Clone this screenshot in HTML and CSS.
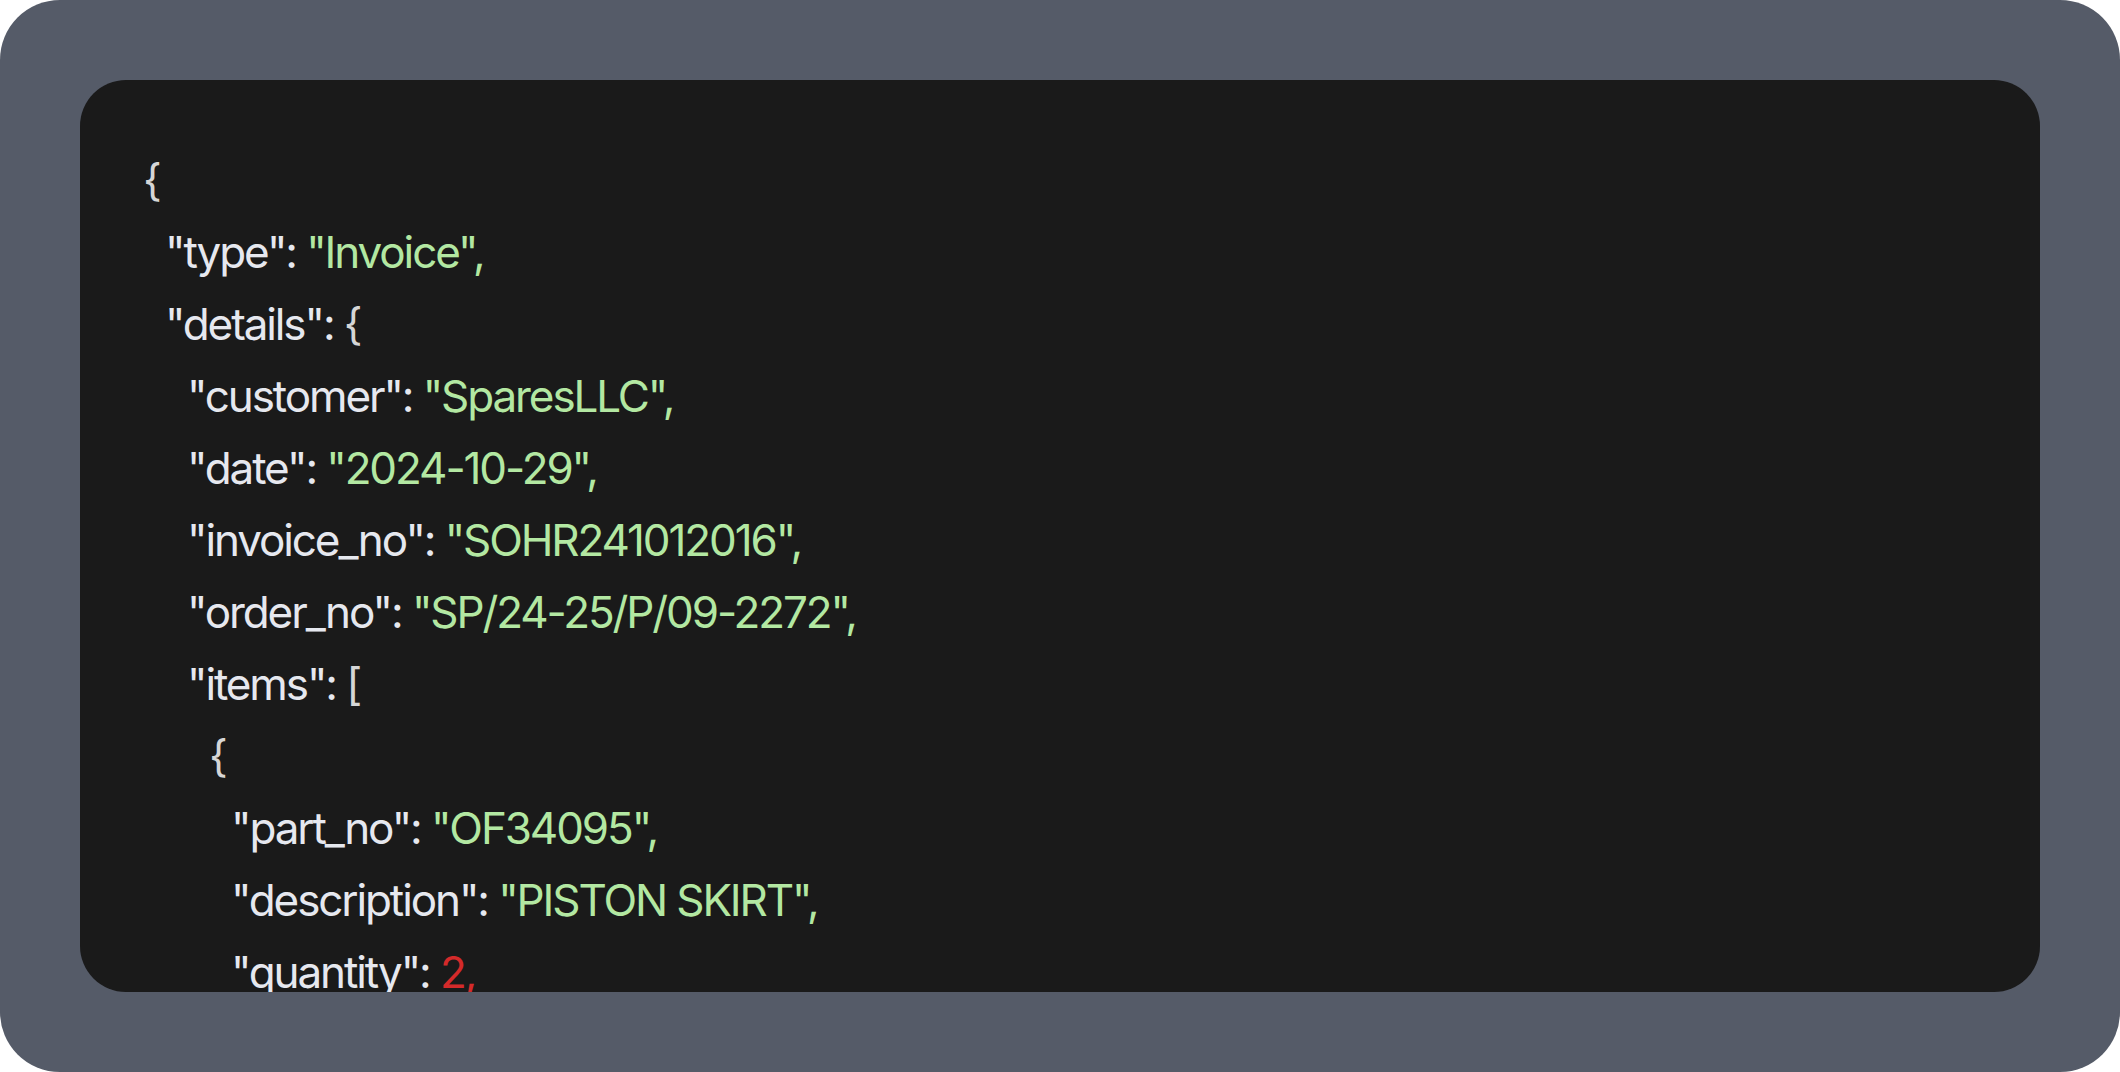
FILE: index.html
```html
<!DOCTYPE html>
<html lang="en">
<head>
<meta charset="utf-8">
<title>Invoice JSON</title>
<link rel="stylesheet" href="styles.css">
</head>
<body>
<div class="frame">
  <div class="panel">
    <div class="code">
      <div class="line l0"><span class="p">{</span></div>
      <div class="line l1"><span class="k">"type"</span><span class="c">: </span><span class="s">"Invoice",</span></div>
      <div class="line l1"><span class="k">"details"</span><span class="c">: </span><span class="p">{</span></div>
      <div class="line l2"><span class="k">"customer"</span><span class="c">: </span><span class="s">"SparesLLC",</span></div>
      <div class="line l2"><span class="k">"date"</span><span class="c">: </span><span class="s">"2024-10-29",</span></div>
      <div class="line l2"><span class="k">"invoice_no"</span><span class="c">: </span><span class="s">"SOHR241012016",</span></div>
      <div class="line l2"><span class="k">"order_no"</span><span class="c">: </span><span class="s">"SP/24-25/P/09-2272",</span></div>
      <div class="line l2"><span class="k">"items"</span><span class="c">: </span><span class="p">[</span></div>
      <div class="line l3"><span class="p">{</span></div>
      <div class="line l4"><span class="k">"part_no"</span><span class="c">: </span><span class="s">"OF34095",</span></div>
      <div class="line l4"><span class="k">"description"</span><span class="c">: </span><span class="s">"PISTON SKIRT",</span></div>
      <div class="line l4"><span class="k">"quantity"</span><span class="c">: </span><span class="n">2,</span></div>
      <div class="line l4"><span class="k">"unit_price"</span><span class="c">: </span><span class="n">1250,</span></div>
    </div>
  </div>
</div>
</body>
</html>
```

FILE: styles.css
```css
* { box-sizing: border-box; }
html, body {
  margin: 0;
  padding: 0;
  background: #ffffff;
}
body {
  width: 2120px;
  height: 1072px;
  overflow: hidden;
}
.frame {
  width: 2120px;
  height: 1072px;
  background: #555b68;
  border-radius: 60px;
  padding: 80px;
}
.panel {
  width: 1960px;
  height: 912px;
  background: #1a1a1a;
  border-radius: 46px;
  overflow: hidden;
  padding: 64px 64px 0 63px;
}
.code {
  font-family: Inter, "Noto Sans", "Liberation Sans", sans-serif;
  font-size: 44px;
  letter-spacing: -2.1px;
  color: #e6e8ef;
}
.line {
  height: 72px;
  line-height: 72px;
  white-space: pre;
}
.l1 { padding-left: 22px; }
.l2 { padding-left: 44px; }
.l3 { padding-left: 66px; }
.l4 { padding-left: 88px; }
.k, .c { color: #e6e8ef; }
.p { color: #d6d6d6; }
.s { color: #b3e8a2; }
.n { color: #d42a2a; }
```
